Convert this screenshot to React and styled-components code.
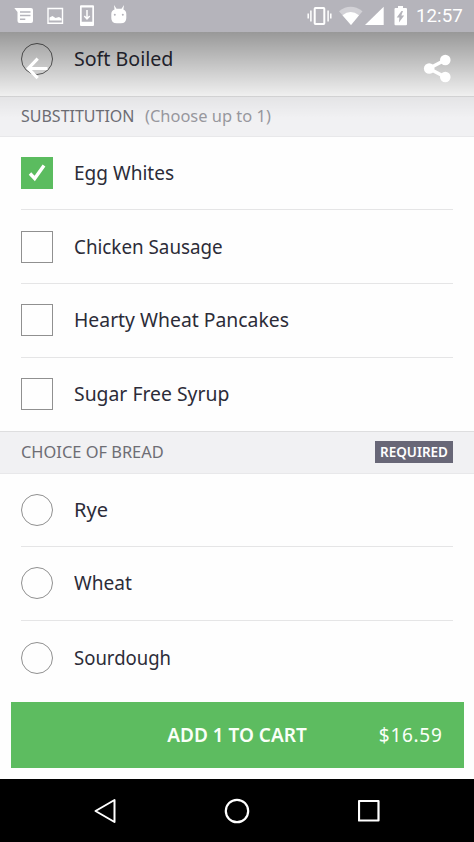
import React from 'react';
import styled, { createGlobalStyle } from 'styled-components';

const GlobalStyle = createGlobalStyle`
  * { box-sizing: border-box; }
  body { margin: 0; background: #fff; }
`;

const Screen = styled.div`
  position: relative;
  display: flex;
  flex-direction: column;
  width: 474px;
  height: 842px;
  overflow: hidden;
  background: #fefefe;
  color: #2c2c38;
  font-family: 'Noto Sans', sans-serif;
`;

const StatusBar = styled.header`
  display: flex;
  flex: none;
  justify-content: space-between;
  height: 32px;
  padding: 0 11px 0 14px;
  background: #b5b4bb;
  svg { display: block; flex: none; }
`;

const StatusGroup = styled.div`
  display: flex;
  height: 32px;
`;

const Clock = styled.time`
  width: 47px;
  margin-left: 9px;
  color: #fff;
  font: 400 18.8px/33px Roboto, sans-serif;
  white-space: nowrap;
`;

const AppBar = styled.div`
  position: absolute;
  z-index: 1;
  top: 32px;
  left: 0;
  right: 0;
  display: flex;
  justify-content: space-between;
  height: 86px;
  padding: 20px 22px 0 26px;
  background: linear-gradient(rgba(0, 0, 0, 0.4), rgba(0, 0, 0, 0.06) 74%, rgba(0, 0, 0, 0));
`;

const Options = styled.main`
  display: flex;
  flex: none;
  flex-direction: column;
  height: 670px;
  overflow: hidden;
`;

const FirstRow = styled.div`
  display: flex;
  flex: none;
  align-items: center;
  height: 64px;
  padding: 0 21px 10px;
`;

const Row = styled.label`
  display: flex;
  flex: none;
  align-items: center;
  height: 73.6px;
  margin: 0 21px;
  border-bottom: ${(p) => (p.$last ? '0' : '1px solid #e5e5e6')};
`;

const Control = styled.span`
  display: flex;
  flex: none;
  align-items: center;
  justify-content: center;
  width: 32px;
  height: 32px;
  margin-right: 21px;
  border: ${(p) => (p.$checked ? '0' : `1.5px solid ${p.$dark ? '#666' : '#909090'}`)};
  border-radius: ${(p) => (p.$round ? '50%' : '0')};
  background: ${(p) => (p.$checked ? '#5bbc5f' : 'transparent')};
`;

const Label = styled.span`
  display: inline-block;
  flex: none;
  transform: scaleX(${(p) => p.$stretch || 1});
  transform-origin: left center;
  font-size: 20px;
  line-height: 28px;
  white-space: nowrap;
`;

const SectionHeader = styled.div`
  display: flex;
  flex: none;
  align-items: center;
  height: ${(p) => p.$height}px;
  padding: 0 21px ${(p) => p.$lift || 0}px;
  border-top: 1px solid #dededf;
  border-bottom: 1px solid #e8e8ea;
  background: #f1f1f3;
`;

const SectionTitle = styled.h2`
  width: 124px;
  margin: 0;
  transform: scaleX(${(p) => p.$stretch || 1});
  transform-origin: left center;
  color: #6d6d74;
  font-size: 16.7px;
  font-weight: 400;
  line-height: 24px;
  white-space: nowrap;
`;

const Hint = styled.span`
  transform: scaleX(0.985);
  transform-origin: left center;
  color: #98989e;
  font-size: 16.7px;
  line-height: 24px;
  white-space: nowrap;
`;

const Badge = styled.span`
  width: 78px;
  height: 22px;
  margin-left: auto;
  background: #686777;
  color: #fff;
  font-size: 13.5px;
  font-weight: 600;
  line-height: 22px;
  text-align: center;
`;

const CartButton = styled.button`
  display: grid;
  flex: none;
  grid-template-columns: 1fr 140px 1fr;
  align-items: center;
  height: 66px;
  margin: 0 10.5px 11px;
  padding: 0 21px;
  border: 0;
  background: #5dbc60;
  color: #fafff8;
  font-family: inherit;
  font-size: 19px;
`;

const CartText = styled.span`
  grid-column: 2;
  font-weight: 600;
  white-space: nowrap;
`;

const Price = styled.span`
  letter-spacing: 0.7px;
  text-align: right;
`;

const NavBar = styled.nav`
  display: flex;
  flex: none;
  align-items: center;
  justify-content: center;
  gap: 107.5px;
  height: 63px;
  background: #000;
  svg { display: block; flex: none; }
`;

const choices = [
  { name: 'Egg Whites', stretch: 0.952, checked: true },
  { name: 'Chicken Sausage', stretch: 0.94 },
  { name: 'Hearty Wheat Pancakes', stretch: 0.968 },
  { name: 'Sugar Free Syrup', stretch: 0.968 },
];

const breads = [
  { name: 'Rye', stretch: 1 },
  { name: 'Wheat', stretch: 0.955 },
  { name: 'Sourdough', stretch: 0.927 },
];

function Notifications() {
  return (
    <StatusGroup>
      <svg width="33" height="32" viewBox="14 0 33 32">
        <path fill="#fff" fillRule="evenodd" d="M14.3 8H31q2 0 2 2v11q0 2-2 2H19.5q-2 0-2-2V12zM20 11.2v1.5h10.5v-1.5zM20 14.7v1.5h10.5v-1.5zM20 18.5V20h5.3v-1.5z" />
      </svg>
      <svg width="32" height="32" viewBox="47 0 32 32">
        <path fill="none" stroke="#fff" strokeWidth="1.4" d="M48 8.5h14.5v14.7H48z" />
        <path fill="#fff" d="M49.5 20.500v-3l3-1.500 3 2 3.500-1 2.500 1.500v2z" />
      </svg>
      <svg width="32" height="32" viewBox="79 0 32 32">
        <path fill="#fff" fillRule="evenodd" d="M81 5.3h12q1 0 1 1V25q0 1-1 1H81q-1 0-1-1V6.300q0-1 1-1zM81.700 7.500v14.300h10.600V7.500z" />
        <path fill="none" stroke="#fff" strokeWidth="1.5" d="M87 10v8.500M84.300 16l2.700 3 2.700-3" />
      </svg>
      <svg width="18" height="32" viewBox="110.700 0 18 32">
        <path fill="#fff" fillRule="evenodd" d="M111 14q0-3.200 3.200-4.500L113.700 5l2.500 3.700h5.000L123.700 5l-.6 4.500Q126 10.800 126 14v4q0 5.300-5.500 5.300h-4Q111 23.300 111 18zM113.500 14.700a1 1 0 1 0 2 0 1 1 0 1 0-2 0M121.500 14.700a1 1 0 1 0 2 0 1 1 0 1 0-2 0" />
      </svg>
    </StatusGroup>
  );
}

function DeviceStatus() {
  return (
    <StatusGroup>
      <svg width="31" height="32" viewBox="306 0 31 32">
        <path fill="none" stroke="#fff" strokeWidth="1.5" d="M308.200 13.500v5M310.900 10.500v11M328.100 10.500v11M330.800 13.500v5" />
        <rect x="314.700" y="8" width="9.600" height="16" rx=".7" fill="none" stroke="#fff" strokeWidth="2" />
      </svg>
      <svg width="26" height="32" viewBox="337 0 26 32">
        <path fill="#d2d1d6" d="M339 11.200q11.500-8.700 23.500 0L351 25z" />
        <path fill="#fff" d="M342.500 15.300q8-6.600 16.500 0L351 25z" />
      </svg>
      <svg width="22" height="32" viewBox="363 0 22 32">
        <path fill="#fff" d="M365 25L383.700 6.700V25z" />
      </svg>
      <svg width="22" height="32" viewBox="385 0 22 32">
        <path fill="#fff" fillRule="evenodd" d="M398 6h5v2h3q1 0 1 1v15.300q0 1-1 1h-10.500q-1 0-1-1V9q0-1 1-1h2.500zM401.500 11l-4.800 6.500h2.700l-.5 5 5.300-7h-2.900l1.700-4.500z" />
      </svg>
      <Clock>12:57</Clock>
    </StatusGroup>
  );
}

export default function App() {
  return (
    <>
      <GlobalStyle />
      <Screen>
        <StatusBar>
          <Notifications />
          <DeviceStatus />
        </StatusBar>
        <AppBar>
          <svg width="24" height="32" viewBox="0 0 24 32" fill="none" stroke="#fff" strokeWidth="3.200">
            <path d="M21.500 16.500H2.500M11.700 6.700L2.300 16.500l9.400 9.600" />
          </svg>
          <svg width="30" height="32" viewBox="0 0 30 32" fill="#fff">
            <path d="M24 7.500L7 16.500l17 9" fill="none" stroke="#fff" strokeWidth="3.500" />
            <circle cx="23.300" cy="8" r="5.300" />
            <circle cx="7.200" cy="16.500" r="5.300" />
            <circle cx="23.300" cy="25" r="5.300" />
          </svg>
        </AppBar>
        <Options>
          <FirstRow>
            <Control $round $dark />
            <Label $stretch={0.98}>Soft Boiled</Label>
          </FirstRow>
          <SectionHeader $height={40.9}>
            <SectionTitle $stretch={0.958}>SUBSTITUTION</SectionTitle>
            <Hint>(Choose up to 1)</Hint>
          </SectionHeader>
          {choices.map(({ name, stretch, checked }, i) => (
            <Row key={name} $last={i === choices.length - 1}>
              <Control $checked={checked}>
                {checked && (
                  <svg width="20" height="20" viewBox="0 0 20 20" fill="none" stroke="#fff" strokeWidth="3.400">
                    <path d="M3 10.500l4.700 5L17 2.500" />
                  </svg>
                )}
              </Control>
              <Label $stretch={stretch}>{name}</Label>
            </Row>
          ))}
          <SectionHeader $height={42.3} $lift={1}>
            <SectionTitle $stretch={0.983}>CHOICE OF BREAD</SectionTitle>
            <Badge>REQUIRED</Badge>
          </SectionHeader>
          {breads.map(({ name, stretch }, i) => (
            <Row key={name} $last={i === breads.length - 1}>
              <Control $round />
              <Label $stretch={stretch}>{name}</Label>
            </Row>
          ))}
        </Options>
        <CartButton>
          <CartText>ADD 1 TO CART</CartText>
          <Price>$16.59</Price>
        </CartButton>
        <NavBar>
          <svg width="24" height="28" viewBox="0 0 24 28" fill="none" stroke="#fff" strokeWidth="2" strokeLinejoin="round">
            <path d="M21.500 3v22L2.500 14z" />
          </svg>
          <svg width="26" height="28" viewBox="0 0 26 28" fill="none" stroke="#fff" strokeWidth="2.200">
            <circle cx="13" cy="14" r="11.200" />
          </svg>
          <svg width="24" height="28" viewBox="0 0 24 28" fill="none" stroke="#fff" strokeWidth="2.200" strokeLinejoin="round">
            <path d="M1 4h19.500v19.500H1z" />
          </svg>
        </NavBar>
      </Screen>
    </>
  );
}
